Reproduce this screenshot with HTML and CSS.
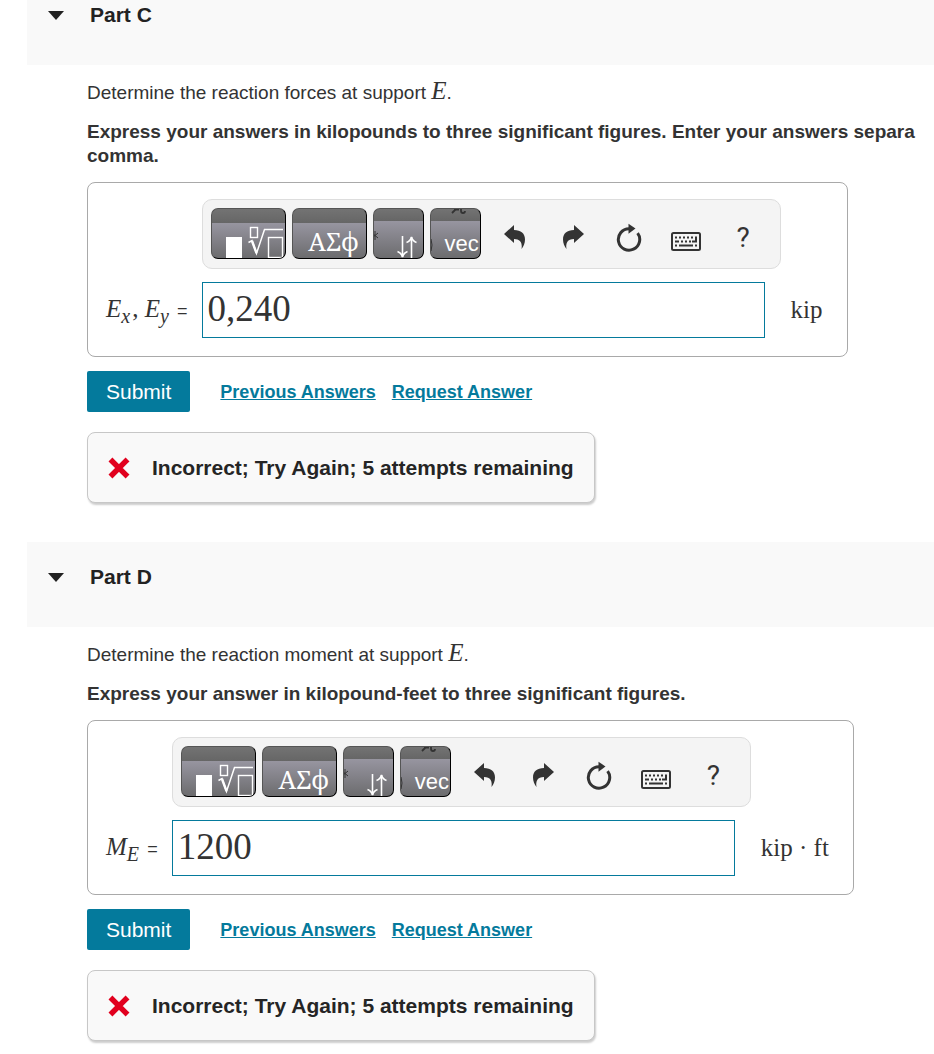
FILE: index.html
```
<!DOCTYPE html>
<html lang="en">
<head>
    <meta charset="UTF-8">
    <meta name="viewport" content="width=device-width, initial-scale=1.0">
    <title>Support reactions</title>
    <link rel="stylesheet" href="styles.css">
</head>
<body>
    <!-- Shared toolbar artwork -->
    <svg class="sprite" aria-hidden="true">
        <symbol id="art-templates" viewBox="0 0 73 49">
            <rect x="14" y="28" width="16" height="21" fill="#fff"/>
            <g fill="none" stroke="#fff">
                <rect x="38.5" y="18.5" width="7" height="10" stroke-width="1.4"/>
                <path d="M36.5 33.5l3.5-2 4.5 13 8-24H71" stroke-width="1.5"/>
                <path d="M40 32l4.5 12" stroke-width="2.4"/>
                <rect x="56.5" y="28.5" width="14" height="20" stroke-width="1.4"/>
            </g>
        </symbol>
        <symbol id="art-arrows" viewBox="0 0 49 49">
            <path d="M1 22v9M-2 24l6 5M-2 29l6-5" stroke="#333" fill="none"/>
            <g fill="none" stroke="#fff" stroke-width="1.6">
                <path d="M28.5 27v21M37.5 49V28"/>
                <path d="M23.5 42.5q4 1.5 5 5.5q1-4 5-5.5M32.5 33.5q4-1.5 5-5.5q1 4 5 5.5"/>
            </g>
        </symbol>
        <symbol id="art-vec" viewBox="0 0 49 49">
            <path d="M21 4l4-4M30 0v2q0 2 2 2t2-2M23 .5h5" stroke="#333" stroke-width="1.8" fill="none"/>
            <path d="M0 30q2 6 0 12" stroke="#333" fill="none"/>
        </symbol>
        <symbol id="icon-undo" viewBox="0 0 30 30">
            <path d="M4 11L14 2v5c7 0 11 3.5 11 9.5 0 4-1.5 7-3.5 9.500 1-6-1-10-7.500-10v4z"/>
        </symbol>
        <symbol id="icon-redo" viewBox="0 0 30 30">
            <path d="M27 11L17 2v5c-7 0-11 3.5-11 9.5 0 4 1.5 7 3.5 9.500-1-6 1-10 7.500-10v4z"/>
        </symbol>
        <symbol id="icon-reset" viewBox="0 0 30 30">
            <path d="M15 5.8A10.7 10.7 0 1 0 23.6 10.1" fill="none" stroke="#333" stroke-width="3"/>
            <path d="M14.5 .7l7 4.8-7 5.2z"/>
        </symbol>
        <symbol id="icon-keyboard" viewBox="0 0 30 30">
            <rect x="1" y="10" width="28" height="17" rx="1.5" fill="none" stroke="#333" stroke-width="2"/>
            <path d="M4 14.5h18" stroke="#333" stroke-width="2" stroke-dasharray="2 2"/>
            <path d="M4 18.5h4M10 18.5h2M14 18.5h2M18 18.5h2M21 18.5h5M25 13.5v6M4 22.5h2M8 22.5h14M24 22.5h2" stroke="#333" stroke-width="2" fill="none"/>
        </symbol>
        <symbol id="icon-wrong" viewBox="0 0 20 20">
            <path d="M4 4l12 12M16 4L4 16" stroke="#e1001e" stroke-width="5" stroke-linecap="square" stroke-linejoin="round"/>
        </symbol>
    </svg>

    <main class="parts">
        <section class="part">
            <h2 class="part-header part-header-top">
                <button type="button" class="part-toggle" aria-expanded="true"><span class="caret"></span>Part C</button>
            </h2>
            <div class="part-body">
                <p class="statement">Determine the reaction forces at support <i class="math">E</i>.</p>
                <p class="instructions">Express your answers in kilopounds to three significant figures. Enter your answers separa<br>comma.</p>
                <form>
                    <div class="answer-box">
                        <div class="toolbar">
                            <button type="button" class="key key-wide" aria-label="Templates"><svg><use href="#art-templates"/></svg></button>
                            <button type="button" class="key key-wide key-greek">ΑΣϕ</button>
                            <button type="button" class="key" aria-label="Arrows"><svg><use href="#art-arrows"/></svg></button>
                            <button type="button" class="key key-vec"><svg><use href="#art-vec"/></svg><span>vec</span></button>
                            <div class="tools">
                                <button type="button" class="tool" aria-label="Undo"><svg><use href="#icon-undo"/></svg></button>
                                <button type="button" class="tool" aria-label="Redo"><svg><use href="#icon-redo"/></svg></button>
                                <button type="button" class="tool" aria-label="Reset"><svg><use href="#icon-reset"/></svg></button>
                                <button type="button" class="tool" aria-label="Keyboard shortcuts"><svg><use href="#icon-keyboard"/></svg></button>
                                <button type="button" class="tool">?</button>
                            </div>
                        </div>
                        <label class="answer-label" for="answer-c"><i>E<sub>x</sub></i>, <i>E<sub>y</sub></i> <span class="equals">=</span></label>
                        <input class="answer-input" id="answer-c" type="text" value="0,240">
                        <span class="unit">kip</span>
                    </div>
                    <div class="actions">
                        <button type="submit" class="submit">Submit</button>
                        <a href="#">Previous Answers</a>
                        <a href="#">Request Answer</a>
                    </div>
                </form>
                <div class="feedback"><svg><use href="#icon-wrong"/></svg>Incorrect; Try Again; 5 attempts remaining</div>
            </div>
        </section>

        <section class="part">
            <h2 class="part-header">
                <button type="button" class="part-toggle" aria-expanded="true"><span class="caret"></span>Part D</button>
            </h2>
            <div class="part-body">
                <p class="statement">Determine the reaction moment at support <i class="math">E</i>.</p>
                <p class="instructions">Express your answer in kilopound-feet to three significant figures.</p>
                <form>
                    <div class="answer-box">
                        <div class="toolbar">
                            <button type="button" class="key key-wide" aria-label="Templates"><svg><use href="#art-templates"/></svg></button>
                            <button type="button" class="key key-wide key-greek">ΑΣϕ</button>
                            <button type="button" class="key" aria-label="Arrows"><svg><use href="#art-arrows"/></svg></button>
                            <button type="button" class="key key-vec"><svg><use href="#art-vec"/></svg><span>vec</span></button>
                            <div class="tools">
                                <button type="button" class="tool" aria-label="Undo"><svg><use href="#icon-undo"/></svg></button>
                                <button type="button" class="tool" aria-label="Redo"><svg><use href="#icon-redo"/></svg></button>
                                <button type="button" class="tool" aria-label="Reset"><svg><use href="#icon-reset"/></svg></button>
                                <button type="button" class="tool" aria-label="Keyboard shortcuts"><svg><use href="#icon-keyboard"/></svg></button>
                                <button type="button" class="tool">?</button>
                            </div>
                        </div>
                        <label class="answer-label" for="answer-d"><i>M<sub>E</sub></i> <span class="equals">=</span></label>
                        <input class="answer-input" id="answer-d" type="text" value="1200">
                        <span class="unit">kip · ft</span>
                    </div>
                    <div class="actions">
                        <button type="submit" class="submit">Submit</button>
                        <a href="#">Previous Answers</a>
                        <a href="#">Request Answer</a>
                    </div>
                </form>
                <div class="feedback"><svg><use href="#icon-wrong"/></svg>Incorrect; Try Again; 5 attempts remaining</div>
            </div>
        </section>
    </main>
</body>
</html>
```
FILE: styles.css
```
* {
    box-sizing: border-box;
}
body {
    margin: 0;
    background: #fff;
    color: #333;
    font-family: "Liberation Sans", Arial, sans-serif;
    font-size: 19px;
    line-height: 24px;
    overflow-x: hidden;
}
button {
    font-family: inherit;
    cursor: pointer;
}
.sprite {
    display: none;
}
.parts {
    padding-left: 27px;
    overflow: hidden;
}
.part-header {
    margin: 0;
    padding: 23px 21px 38px;
    background: #f9f9f9;
    line-height: 24px;
}
.part-header-top {
    padding-top: 3px;
}
.part-toggle {
    display: flex;
    align-items: center;
    gap: 26px;
    padding: 0;
    border: none;
    background: none;
    color: #222;
    font-size: 21px;
    font-weight: bold;
    line-height: 24px;
}
.caret {
    border-left: 8px solid transparent;
    border-right: 8px solid transparent;
    border-top: 9px solid #222;
}
.part-body {
    padding: 16px 0 39px 60px;
}
.statement {
    margin: 0 0 15px;
}
.math {
    font-family: "Liberation Serif", serif;
    font-size: 25px;
    line-height: 20px;
}
.instructions {
    margin: 0 0 14px;
    font-weight: bold;
    white-space: nowrap;
}

/* Answer box */
.answer-box {
    display: grid;
    grid-template-columns: auto 563px auto;
    align-items: center;
    row-gap: 13px;
    width: fit-content;
    padding: 16px 24px 18px 18px;
    border: 1px solid #a9a9a9;
    border-radius: 8px;
}
.toolbar {
    grid-column: 2 / 4;
    justify-self: start;
    display: flex;
    gap: 6px;
    padding: 8px 8px 9px;
    border: 1px solid #ddd;
    border-radius: 10px;
    background: #f4f4f4;
}
.key {
    width: 51px;
    height: 51px;
    padding: 0;
    border: 1px solid #555;
    border-right-color: #000;
    border-bottom-color: #000;
    border-radius: 7px;
    background: linear-gradient(#737373, #666 12px, #9795a0 12px, #6c6c6e);
    color: #fff;
    overflow: hidden;
}
.key-wide {
    width: 75px;
    background: linear-gradient(#737373, #666 14px, #9795a0 14px, #6c6c6e);
}
.key svg {
    display: block;
    width: 100%;
    height: 49px;
}
.key-greek {
    padding: 14px 0 0 9px;
    font-family: "Noto Serif", "DejaVu Serif", serif;
    font-size: 25px;
}
.key-vec {
    position: relative;
    font-size: 22px;
}
.key-vec span {
    position: absolute;
    left: 14px;
    bottom: 1px;
}
.tools {
    display: flex;
}
.tool {
    display: flex;
    align-items: center;
    justify-content: center;
    width: 57px;
    padding: 9px 0 0;
    border: none;
    background: none;
    color: #333;
    font-family: Roboto, sans-serif;
    font-size: 28px;
    line-height: 30px;
}
.tool svg {
    width: 30px;
    height: 30px;
    fill: #333;
}
.answer-label {
    padding-right: 14px;
    font-family: "Liberation Serif", serif;
    font-size: 25px;
}
.answer-label sub {
    margin-right: 2px;
    font-size: 20px;
    line-height: 0;
}
.equals {
    font-family: "Liberation Sans", Arial, sans-serif;
    font-size: 18px;
}
.answer-input {
    width: 100%;
    height: 56px;
    padding: 0 5px 4px;
    border: 1px solid #047a9c;
    color: #333;
    font-family: "Liberation Serif", serif;
    font-size: 37px;
    outline: none;
}
.unit {
    padding-left: 26px;
    font-family: "Liberation Serif", serif;
    font-size: 25px;
}

/* Submit row and result */
.actions {
    display: flex;
    align-items: center;
    gap: 16px;
    margin: 14px 0 20px;
}
.submit {
    height: 41px;
    margin-right: 14px;
    padding: 0 19px;
    border: none;
    border-radius: 2px;
    background: #047a9c;
    color: #fff;
    font-size: 21px;
}
.actions a {
    color: #047a9c;
    font-size: 18px;
    font-weight: bold;
}
.feedback {
    display: flex;
    align-items: center;
    gap: 22px;
    width: fit-content;
    height: 71px;
    padding: 0 20px;
    border: 1px solid #c7c7c7;
    border-radius: 8px;
    background: #f9f9f9;
    box-shadow: 1px 2px 2px rgba(0, 0, 0, 0.2);
    color: #252525;
    font-size: 21px;
    font-weight: bold;
}
.feedback svg {
    width: 22px;
    height: 22px;
}
```
